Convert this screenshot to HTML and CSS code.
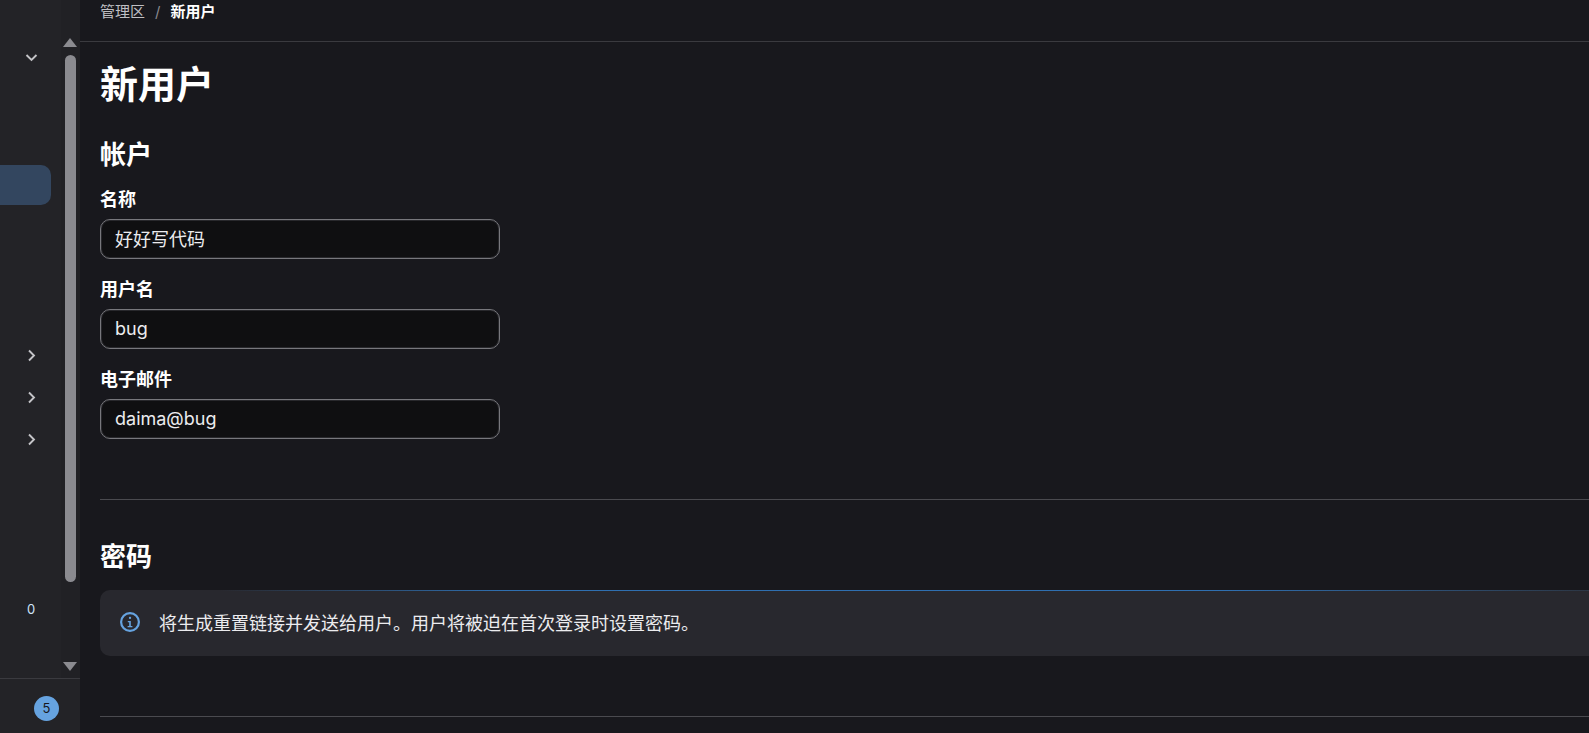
FILE: index.html
```html
<!DOCTYPE html>
<html lang="zh-CN">
<head>
    <meta charset="UTF-8">
    <meta name="viewport" content="width=device-width, initial-scale=1.0">
    <title>新用户</title>
    <link rel="stylesheet" href="styles.css">
</head>
<body>
    <aside class="sidebar">
        <div class="sidebar-scroll">
            <nav class="nav">
                <div class="nav-row nav-row-first">
                    <svg class="chevron" viewBox="0 0 12 12"><path d="M2 4l4 4 4-4"/></svg>
                </div>
                <div class="nav-active"></div>
                <div class="nav-group">
                    <div class="nav-row">
                        <svg class="chevron" viewBox="0 0 12 12"><path d="M4 2l4 4-4 4"/></svg>
                    </div>
                    <div class="nav-row">
                        <svg class="chevron" viewBox="0 0 12 12"><path d="M4 2l4 4-4 4"/></svg>
                    </div>
                    <div class="nav-row">
                        <svg class="chevron" viewBox="0 0 12 12"><path d="M4 2l4 4-4 4"/></svg>
                    </div>
                </div>
                <div class="nav-count">0</div>
            </nav>
            <div class="scrollbar">
                <span class="arrow-up"></span>
                <span class="thumb"></span>
                <span class="arrow-down"></span>
            </div>
        </div>
        <div class="sidebar-footer">
            <span class="badge">5</span>
        </div>
    </aside>

    <main class="main">
        <header class="breadcrumb">
            <span class="crumb">管理区</span>
            <span class="crumb-sep">/</span>
            <span class="crumb-current">新用户</span>
        </header>

        <div class="content">
            <h1>新用户</h1>
            <h2 class="section-first">帐户</h2>

            <label class="field-label" for="name">名称</label>
            <input class="field-input" id="name" type="text" value="好好写代码">

            <label class="field-label" for="username">用户名</label>
            <input class="field-input" id="username" type="text" value="bug">

            <label class="field-label" for="email">电子邮件</label>
            <input class="field-input" id="email" type="text" value="daima@bug">

            <hr class="divider">

            <h2 class="section-password">密码</h2>
            <div class="alert">
                <svg class="alert-icon" viewBox="0 0 20 20">
                    <circle cx="10" cy="10" r="8.9"/>
                    <rect class="dot" x="8.9" y="4.8" width="2.2" height="2.2" rx="1"/>
                    <path class="stem" d="M7.8 9h3v5h1.6v1.2H7.6V14h1.6v-3.8H7.8z"/>
                </svg>
                <span class="alert-text">将生成重置链接并发送给用户。用户将被迫在首次登录时设置密码。</span>
            </div>

            <hr class="divider">
        </div>
    </main>
</body>
</html>
```

FILE: styles.css
```css
html, body {
    height: 100%;
}

body {
    display: flex;
    margin: 0;
    overflow: hidden;
    background-color: #18181d;
    color: #ffffff;
    font-family: Inter, "Noto Sans CJK SC", sans-serif;
}

.sidebar {
    display: flex;
    flex-direction: column;
    flex: 0 0 80px;
    height: 733px;
    background-color: #232327;
}

.sidebar-scroll {
    display: flex;
    flex: 1;
    min-height: 0;
}

.nav {
    flex: 0 0 61px;
}

.nav-row {
    display: flex;
    align-items: center;
    justify-content: center;
    height: 42px;
    padding-left: 1px;
}

.nav-row-first {
    margin-top: 36px;
}

.nav-active {
    width: 51px;
    height: 40px;
    margin-top: 87px;
    background-color: #33465f;
    border-radius: 0 10px 10px 0;
}

.nav-group {
    margin-top: 129px;
}

.nav-count {
    margin-top: 141px;
    padding-left: 1px;
    font-size: 13px;
    line-height: 16px;
    text-align: center;
    color: #cfe4fa;
}

.chevron {
    width: 15px;
    height: 15px;
    fill: none;
    stroke: #c4c4c8;
    stroke-width: 1.5;
}

.scrollbar {
    display: flex;
    flex-direction: column;
    align-items: center;
    flex: 0 0 19px;
    padding-right: 1px;
    box-sizing: border-box;
    background-color: #212125;
}

.arrow-up,
.arrow-down {
    width: 0;
    height: 0;
    border-left: 7px solid transparent;
    border-right: 7px solid transparent;
}

.arrow-up {
    margin-top: 38px;
    border-bottom: 9px solid #8b8b90;
}

.arrow-down {
    margin-top: 80px;
    border-top: 9px solid #8b8b90;
}

.thumb {
    width: 11px;
    height: 527px;
    margin-top: 8px;
    background-color: #8b8b90;
    border-radius: 6px;
}

.sidebar-footer {
    display: flex;
    align-items: center;
    flex: 0 0 55px;
    padding: 5px 0 0 34px;
    box-sizing: border-box;
    border-top: 1px solid #3a3a3f;
}

.badge {
    width: 25px;
    height: 25px;
    border-radius: 50%;
    background-color: #66a3e0;
    color: #18181d;
    font-size: 13px;
    line-height: 25px;
    text-align: center;
}

.main {
    flex: 1;
    min-width: 0;
}

.breadcrumb {
    display: flex;
    align-items: center;
    gap: 10px;
    height: 24px;
    padding: 0 0 17px 20px;
    border-bottom: 1px solid #3a3a3f;
    font-size: 15px;
    line-height: 24px;
}

.crumb {
    color: #bfbfc3;
}

.crumb-sep {
    color: #89888d;
}

.crumb-current {
    font-weight: 700;
}

.content {
    display: flex;
    flex-direction: column;
    padding-left: 20px;
}

h1 {
    margin: 20px 0 0;
    font-size: 38px;
    line-height: 44px;
    font-weight: 700;
}

h2 {
    margin: 0;
    font-size: 26px;
    line-height: 32px;
    font-weight: 700;
}

.section-first {
    margin-top: 33px;
    margin-bottom: 8px;
}

.section-password {
    margin-top: 41px;
    margin-bottom: 17px;
}

.field-label {
    margin-top: 21px;
    margin-bottom: 9px;
    font-size: 18px;
    line-height: 20px;
    font-weight: 700;
}

.section-first + .field-label {
    margin-top: 11px;
}

.field-input {
    width: 400px;
    height: 40px;
    padding: 0 14px 2px;
    box-sizing: border-box;
    background-color: #0f0f11;
    border: 1px solid #77777c;
    border-radius: 10px;
    box-shadow: inset 0 0 0 1px #28282c;
    color: #ececef;
    font-family: inherit;
    font-size: 18px;
}

.divider {
    width: 100%;
    height: 1px;
    margin: 60px 0 0;
    border: 0;
    background-color: #4a4a4f;
}

.alert {
    display: flex;
    align-items: center;
    gap: 19px;
    height: 66px;
    margin-right: -12px;
    padding: 0 0 3px 20px;
    background-color: #28282e;
    border-radius: 10px;
    border-top: 1px solid transparent;
    box-sizing: border-box;
    background-image: linear-gradient(#28282e, #28282e), linear-gradient(90deg, #28282e 8%, #2f6fb0 27%, #2f6fb0 75%, #2c3440 100%);
    background-origin: border-box;
    background-clip: padding-box, border-box;
}

.alert-icon {
    flex: 0 0 20px;
    width: 20px;
    height: 20px;
}

.alert-icon circle {
    fill: none;
    stroke: #66a3e0;
    stroke-width: 2.2;
}

.alert-icon .dot,
.alert-icon .stem {
    fill: #66a3e0;
}

.alert-text {
    font-size: 18px;
    color: #ececef;
}
```
